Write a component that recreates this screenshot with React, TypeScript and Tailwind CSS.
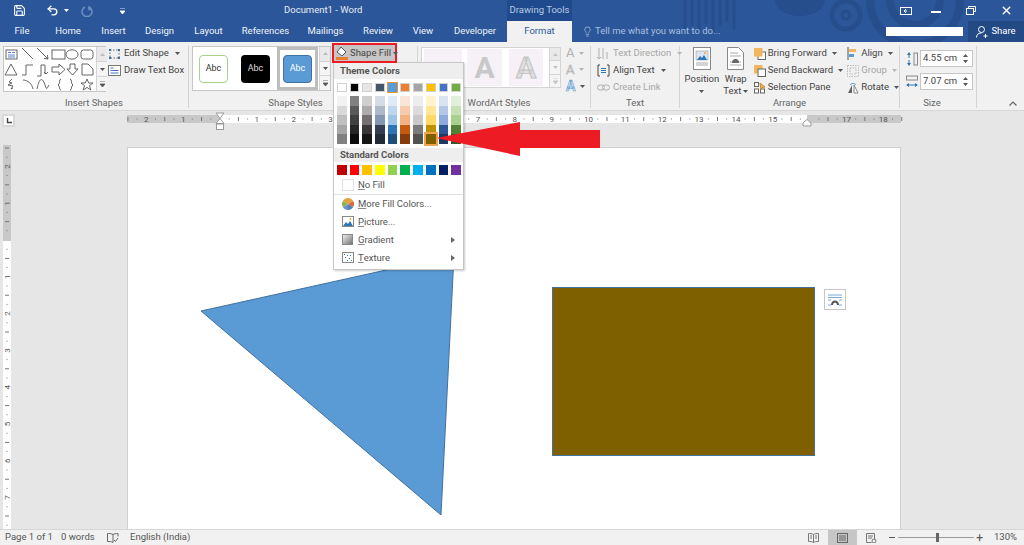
import React from 'react';
import { Lightbulb, Save, Undo2, X } from 'lucide-react';

const tabs = [
  { label: 'File', width: 'w-[44px]' },
  { label: 'Home', width: 'w-[48px]' },
  { label: 'Insert', width: 'w-[43px]' },
  { label: 'Design', width: 'w-[49px]' },
  { label: 'Layout', width: 'w-[49px]' },
  { label: 'References', width: 'w-[65px]' },
  { label: 'Mailings', width: 'w-[55px]' },
  { label: 'Review', width: 'w-[50px]' },
  { label: 'View', width: 'w-[40px]' },
  { label: 'Developer', width: 'w-[64px]' },
];

const themeTop = ['#ffffff', '#000000', '#e7e6e6', '#44546a', '#5b9bd5', '#ed7d31', '#a5a5a5', '#ffc000', '#4472c4', '#70ad47'];

const themeShades = [
  ['#f2f2f2', '#d9d9d9', '#bfbfbf', '#a6a6a6', '#808080'],
  ['#808080', '#595959', '#404040', '#262626', '#0d0d0d'],
  ['#d0cece', '#aeabab', '#757070', '#3a3838', '#171616'],
  ['#d6dce5', '#adb9ca', '#8497b0', '#333f50', '#222a35'],
  ['#deebf7', '#bdd7ee', '#9dc3e6', '#2e75b6', '#1f4e79'],
  ['#fbe5d6', '#f8cbad', '#f4b183', '#c55a11', '#843c0c'],
  ['#ededed', '#dbdbdb', '#c9c9c9', '#7b7b7b', '#525252'],
  ['#fff2cc', '#ffe699', '#ffd966', '#bf9000', '#7f6000'],
  ['#dae3f3', '#b4c7e7', '#8faadc', '#2f5597', '#203864'],
  ['#e2f0d9', '#c5e0b4', '#a9d18e', '#548235', '#385723'],
];

const standard = ['#c00000', '#ff0000', '#ffc000', '#ffff00', '#92d050', '#00b050', '#00b0f0', '#0070c0', '#002060', '#7030a0'];

const Caret = ({ light = false }: { light?: boolean }) => (
  <svg width="5" height="3" viewBox="0 0 5 3" className="shrink-0">
    <path d="M0 0h5L2.5 3z" fill={light ? '#b5b5b5' : '#555'} />
  </svg>
);

const Group = ({ label, width, labelPad = '', children }: { label: string; width: string; labelPad?: string; children: React.ReactNode }) => (
  <div className={`${width} h-[62px] mt-[4px] border-r border-[#d4d4d4] flex flex-col shrink-0`}>
    <div className="h-[55px] flex">{children}</div>
    <div className={`${labelPad} h-[10px] leading-[10px] text-center text-[9.5px] text-[#666]`}>{label}</div>
  </div>
);

const ScrollButtons = ({ light = false }: { light?: boolean }) => {
  const fill = light ? '#c4c4c4' : '#555';
  return (
    <div className="w-[11px] h-full flex flex-col border-l border-[#d4d4d4] bg-[#f5f5f5] shrink-0">
      <div className="flex-1 flex items-center justify-center bg-[#e9e9e9] border-b border-[#d4d4d4]">
        <svg width="5" height="3"><path d="M0 3h5L2.5 0z" fill={light ? '#c4c4c4' : '#bbb'} /></svg>
      </div>
      <div className="flex-1 flex items-center justify-center border-b border-[#d4d4d4]">
        <svg width="5" height="3"><path d="M0 0h5L2.5 3z" fill={fill} /></svg>
      </div>
      <div className="flex-1 flex items-center justify-center">
        <svg width="5" height="6"><path d="M0 0h5M0 3h5L2.5 6z" stroke={fill} strokeWidth="0.8" fill={fill} /></svg>
      </div>
    </div>
  );
};

const ShapeGallery = () => (
  <svg width="92" height="44" viewBox="0 0 92 44" fill="none" stroke="#555" strokeWidth="0.9" className="shrink-0">
    <rect x="2" y="3" width="11" height="9" fill="#fff" />
    <path d="M4 5.5h3M8 5.5h3M4 8h7M4 10h7" stroke="#4472c4" />
    <path d="M18 1l11 11M33 1l11 11M44 12l-4-.6M44 12l-.6-4" />
    <rect x="48" y="3" width="13" height="9" />
    <ellipse cx="68" cy="7.5" rx="6" ry="4.7" />
    <rect x="77" y="3" width="12" height="9" rx="2.5" />
    <path d="M7 17l6 11H1zM18 28h4V18h7M33 29h4V18h4v9M42 27l-2-2M42 27l2-2" />
    <path d="M48 20h7v-3l6 5.5-6 5.5v-3h-7zM66 17h5v5h3l-5.5 6-5.5-6h3zM78 17h6l5 5v6H78z" />
    <path d="M8 32l-3 3 3 1-4 2 5 1-2 3 2-1M19 33c5 0 9 4 10 9M33 42c3-14 6-10 8-4s2 3 4 0M57 32c-2 0-1 4-2 5l-1 1 1 1c1 1 0 4 2 4M66 32c2 0 1 4 2 5l1 1-1 1c-1 1 0 4-2 4" />
    <path d="M83 32l1.7 4h4.3l-3.5 2.6 1.3 4.400-3.800-2.600-3.800 2.600 1.300-4.400-3.500-2.600h4.300z" />
  </svg>
);

const Style = ({ className, text }: { className: string; text: string }) => (
  <div className={`w-[29px] h-[28px] rounded-[4px] flex items-center justify-center text-[9px] ${className}`}>
    <span className={text}>Abc</span>
  </div>
);

const SmallRow = ({ icon, label, light = false, caret = false, gap = 'gap-[3px]' }: { icon: React.ReactNode; label: string; light?: boolean; caret?: boolean; gap?: string }) => (
  <div className={`h-[17px] flex items-center ${gap} text-[9.5px] whitespace-nowrap ${light ? 'text-[#a6a6a6]' : 'text-[#444]'}`}>
    {icon}
    <span>{label}</span>
    {caret && <span className="ml-[3px]"><Caret light={light} /></span>}
  </div>
);

const HorizontalRuler = () => {
  const zero = 93;
  const cm = 36.85;
  const ticks: number[] = [];
  for (let i = -2.5; i <= 18.5; i += 0.25) if (i % 1 !== 0) ticks.push(i);
  const nums = [-2, -1, 1, 2, 3, 4, 5, 6, 7, 8, 9, 10, 11, 12, 13, 14, 15, 17, 18];
  return (
    <svg width="774" height="8" className="overflow-visible shrink-0">
      <rect width="774" height="8" fill="#c8c8c8" />
      <rect x={zero} width="587" height="8" fill="#fff" />
      {ticks.map((t) => {
        const x = zero + t * cm;
        return t % 0.5 === 0
          ? <rect key={t} x={x - 0.5} y="2" width="1" height="4" fill="#777" />
          : <rect key={t} x={x - 0.5} y="3.5" width="1" height="1" fill="#777" />;
      })}
      {nums.map((n) => (
        <text key={n} x={zero + n * cm} y="7" textAnchor="middle" fontSize="8" fill="#555">{Math.abs(n)}</text>
      ))}
      <path d="M89 -2h8l-4 5.500 4 5h-8l4-5z" fill="#fff" stroke="#999" />
      <rect x="89.5" y="9" width="7" height="5.5" fill="#fff" stroke="#999" />
      <path d="M676 11h8v-3l-4-3.500-4 3.500z" fill="#fff" stroke="#999" />
    </svg>
  );
};

const VerticalRuler = () => {
  const zero = 95;
  const cm = 36.8;
  const ticks: number[] = [];
  for (let i = -2.5; i <= 7.9; i += 0.25) if (i % 1 !== 0) ticks.push(i);
  const nums = [-2, -1, 1, 2, 3, 4, 5, 6, 7];
  return (
    <svg width="8" height="384" className="shrink-0 overflow-visible">
      <rect width="8" height="384" fill="#fff" />
      <rect width="8" height={zero + 1} fill="#c8c8c8" />
      {ticks.map((t) => {
        const y = zero + t * cm;
        return t % 0.5 === 0
          ? <rect key={t} x="2" y={y - 0.5} width="4" height="1" fill="#777" />
          : <rect key={t} x="3.5" y={y - 0.5} width="1" height="1" fill="#777" />;
      })}
      {nums.map((n) => (
        <text key={n} x="4" y={zero + n * cm + 3} textAnchor="middle" fontSize="8" fill="#555" transform={`rotate(-90 4 ${zero + n * cm})`}>{Math.abs(n)}</text>
      ))}
    </svg>
  );
};

const MenuRow = ({ icon, label, rest, arrow = false }: { icon: React.ReactNode; label: string; rest: string; arrow?: boolean }) => (
  <div className="h-[18px] flex items-center text-[9.5px] text-[#555]">
    <div className="w-[24px] flex justify-center pl-[3px]">{icon}</div>
    <span className="underline decoration-[#888]">{label}</span>
    <span>{rest}</span>
    {arrow && (
      <svg width="4" height="6" className="ml-auto mr-[8px]"><path d="M0 0l4 3-4 3z" fill="#666" /></svg>
    )}
  </div>
);

const ShapeFillMenu = () => (
  <div className="absolute left-[333px] top-[62px] w-[131px] h-[208px] bg-white border border-[#c6c6c6] shadow-[1px_1px_2px_rgba(0,0,0,0.2)] flex flex-col">
    <div className="h-[16px] bg-[#eeeeee] px-[6px] text-[9.5px] font-bold leading-[16px] text-[#555]">Theme Colors</div>
    <div className="flex gap-[3px] pl-[3px] mt-[4px]">
      {themeTop.map((c, i) => (
        <div key={c} className={`w-[9.7px] h-[9px] ${i === 4 ? 'outline outline-[1.5px] outline-[#f29436]' : 'outline outline-1 -outline-offset-1 outline-[#d0d0d0]'}`} style={{ backgroundColor: c }} />
      ))}
    </div>
    <div className="flex gap-[3px] pl-[3px] mt-[4px]">
      {themeShades.map((col, i) => (
        <div key={i} className="flex flex-col w-[9.7px]">
          {col.map((c, j) => (
            <div key={j} className={`h-[9.6px] ${i === 7 && j === 4 ? 'relative z-10 outline-2 outline-[#f2a44e]' : ''}`} style={{ backgroundColor: c }} />
          ))}
        </div>
      ))}
    </div>
    <div className="h-[14px] bg-[#eeeeee] mt-[4px] px-[6px] text-[9.5px] font-bold leading-[14px] text-[#555]">Standard Colors</div>
    <div className="flex gap-[3px] pl-[3px] mt-[3px]">
      {standard.map((c) => (
        <div key={c} className="w-[9.7px] h-[9.7px]" style={{ backgroundColor: c }} />
      ))}
    </div>
    <div className="h-[18px] mt-[1px] flex items-center text-[9.5px] text-[#555]">
      <div className="w-[24px] flex justify-center pl-[3px]">
        <div className="w-[12px] h-[12px] border border-[#e2e2e2]" />
      </div>
      <span className="underline decoration-[#888]">N</span><span>o Fill</span>
    </div>
    <div className="h-px bg-[#e2e2e2] shrink-0" />
    <MenuRow
      label="M"
      rest="ore Fill Colors..."
      icon={
        <svg width="12" height="12" viewBox="0 0 12 12">
          <path d="M6 6V0a6 6 0 0 1 5.2 3z" fill="#e8a33d" />
          <path d="M6 6l5.2-3a6 6 0 0 1 0 6z" fill="#d9693a" />
          <path d="M6 6l5.2 3A6 6 0 0 1 6 12z" fill="#4f81bd" />
          <path d="M6 6v6a6 6 0 0 1-5.2-3z" fill="#6f8fc7" />
          <path d="M6 6L.8 9a6 6 0 0 1 0-6z" fill="#8db255" />
          <path d="M6 6L.8 3A6 6 0 0 1 6 0z" fill="#d9a441" />
        </svg>
      }
    />
    <MenuRow
      label="P"
      rest="icture..."
      icon={
        <svg width="12" height="11" viewBox="0 0 12 11">
          <rect x="0.5" y="0.5" width="11" height="10" fill="#fff" stroke="#888" />
          <path d="M1 10l3-4 2 2 2-3 3 5z" fill="#2e75b6" />
          <circle cx="8.5" cy="3" r="1" fill="#f0a33c" />
        </svg>
      }
    />
    <MenuRow
      label="G"
      rest="radient"
      arrow
      icon={<div className="w-[11px] h-[11px] border border-[#888] bg-gradient-to-br from-[#eeeeee] to-[#777777]" />}
    />
    <MenuRow
      label="T"
      rest="exture"
      arrow
      icon={
        <svg width="12" height="11" viewBox="0 0 12 11">
          <rect x="0.5" y="0.5" width="11" height="10" fill="#fff" stroke="#888" />
          <path d="M2 2h1v1H2zM5 3h1v1H5zM3 5h1v1H3zM7 6h1v1H7zM9 8h1v1H9zM5 8h1v1H5zM8 3h1v1H8z" fill="#2e75b6" />
        </svg>
      }
    />
  </div>
);

const App = () => {
  return (
    <div className="relative w-[1024px] h-[545px] overflow-hidden flex flex-col bg-[#e6e6e6] font-['Roboto',sans-serif]">
      {/* title bar */}
      <div className="relative h-[42px] bg-[#2b579a] text-white shrink-0">
        <svg width="344" height="42" viewBox="0 0 344 42" className="absolute right-0 top-0" fill="none" stroke="#264e8c">
          <path d="M5 0v30M12 0v26M19 0v34M26 0v24M33 0v32M40 0v26M47 0v22M54 0v30" strokeWidth="3" />
          <path d="M95 0a25 16 0 0 0 50 0" fill="#264e8c" stroke="none" />
          <circle cx="166" cy="15" r="14" strokeWidth="5" />
          <circle cx="166" cy="15" r="4" strokeWidth="3" />
          <circle cx="235" cy="0" r="45" strokeWidth="8" />
          <circle cx="235" cy="0" r="25" strokeWidth="8" />
        </svg>
        <div className="relative h-[21px] flex items-center">
          <div className="w-[284px] flex items-center">
            <Save size={13} strokeWidth={2} className="ml-[13px]" />
            <Undo2 size={13} strokeWidth={2.5} className="ml-[20px]" />
            <span className="ml-[5px]"><svg width="5" height="3"><path d="M0 0h5L2.5 3z" fill="#fff" /></svg></span>
            <svg width="12" height="12" viewBox="0 0 12 12" fill="none" stroke="#6e8fc0" strokeWidth="1.5" className="ml-[12px]">
              <path d="M8 2a5 5 0 1 1-4 0M8 1v3.5h3" />
            </svg>
            <svg width="5" height="6" className="ml-[27px]"><path d="M0 0h5M0 3h5L2.5 6z" stroke="#fff" strokeWidth="0.8" fill="#fff" /></svg>
          </div>
          <div className="w-[223px] text-[9.5px] text-[#e6ecf5] whitespace-nowrap">Document1 - Word</div>
          <div className="w-[65px] h-full bg-[#1f4b8e] text-[9.5px] text-[#b9cae3] flex items-center justify-center whitespace-nowrap">Drawing Tools</div>
          <div className="ml-auto flex items-center">
            <svg width="12" height="9" viewBox="0 0 12 9" fill="none" stroke="#fff" className="mr-[19px]"><rect x="0.5" y="1.5" width="11" height="7" /><path d="M0 1.5h12M7 5L4 5M6 3L4 5l2 2" /></svg>
            <div className="w-[10px] h-[2px] bg-white mt-[2px] mr-[25px]" />
            <svg width="10" height="9" viewBox="0 0 10 9" fill="none" stroke="#fff" className="mr-[24px]"><rect x="0.5" y="2.5" width="7" height="6" /><path d="M2.5 2.5V.5h7v5h-2" /></svg>
            <X size={13} strokeWidth={2.5} className="mr-[11px]" />
          </div>
        </div>
        <div className="relative h-[21px] flex items-center text-[9.5px] text-[#f0f3f9]">
          {tabs.map((t) => (
            <div key={t.label} className={`${t.width} text-center`}>{t.label}</div>
          ))}
          <div className="w-[65px] h-full bg-[#f1f1f1] text-[#2b579a] flex items-center justify-center">Format</div>
          <Lightbulb size={11} strokeWidth={1.5} className="ml-[10px] text-[#b9cae3]" />
          <span className="ml-[2px] text-[#a9bfdf] whitespace-nowrap">Tell me what you want to do...</span>
          <div className="ml-auto w-[77px] h-[9px] bg-white" />
          <div className="ml-[5px] w-[56px] h-full bg-[#234a85] flex items-center justify-center gap-[3px] text-white">
            <svg width="12" height="12" viewBox="0 0 12 12" fill="none" stroke="#fff"><circle cx="5.5" cy="3.5" r="3" /><path d="M.5 11.5c0-3 2-4.500 5-4.500M9.5 8v4M7.5 10h4" /></svg>
            <span>Share</span>
          </div>
        </div>
      </div>

      {/* ribbon */}
      <div className="h-[69px] bg-[#f1f1f1] flex shrink-0 border-b border-[#d6d6d6]">
        <Group label="Insert Shapes" width="w-[189px]">
          <div className="ml-[3px] w-[103px] h-[46px] bg-white border border-[#c6c6c6] flex">
            <ShapeGallery />
            <ScrollButtons />
          </div>
          <div className="ml-[2px] -mt-[1px] flex flex-col">
            <SmallRow
              caret
              gap="gap-[3px]"
              label="Edit Shape"
              icon={
                <svg width="13" height="12" viewBox="0 0 13 12" fill="none">
                  <path d="M2 2h9v8H2z" stroke="#666" strokeDasharray="1.5 1.5" />
                  <path d="M1 1h2v2H1zM10 1h2v2h-2zM1 9h2v2H1zM10 9h2v2h-2z" fill="#2e75b6" />
                </svg>
              }
            />
            <SmallRow
              label="Draw Text Box"
              icon={
                <svg width="13" height="11" viewBox="0 0 13 11" fill="none">
                  <rect x="0.5" y="0.5" width="12" height="10" stroke="#777" fill="#fff" />
                  <path d="M2.5 3h3M2.5 5.5h8M2.5 8h8" stroke="#4472c4" />
                </svg>
              }
            />
          </div>
        </Group>

        <Group label="Shape Styles" width="w-[229px]" labelPad="pr-[15px]">
          <div className="ml-[3px] w-[139px] h-[45px] bg-white border border-[#c6c6c6] flex items-center">
            <div className="flex-1 flex items-center pl-[6px]">
              <Style className="bg-white border border-[#a9d18e]" text="text-[#333]" />
              <Style className="bg-black ml-[13px]" text="text-[#ddd]" />
              <div className="ml-[7px] w-[41px] h-[43px] border-[3px] border-[#bdbdbd] flex items-center justify-center">
                <Style className="bg-[#5b9bd5] border border-[#41719c]" text="text-white" />
              </div>
            </div>
            <ScrollButtons />
          </div>
          <div className="relative z-20 ml-[1px] mt-[-3px] w-[65px] h-[20px] border-2 border-[#ed1c24] bg-[#c6c6c6] flex items-center pl-[2px] gap-[2px] text-[9.5px] text-[#444] whitespace-nowrap">
            <svg width="12" height="14" viewBox="0 0 12 14" className="shrink-0">
              <path d="M5 1l5 5-4 4-5-4z" fill="#fff" stroke="#555" />
              <rect y="11" width="12" height="3" fill="#ed7d31" />
            </svg>
            <span>Shape Fill</span>
            <Caret />
          </div>
        </Group>

        <Group label="WordArt Styles" width="w-[173px]" labelPad="pr-[10px]">
          <div className="ml-[3px] mt-[1px] w-[140px] h-[41px] bg-white border border-[#d4d4d4] flex">
            <div className="flex-1 flex items-center pl-[2px] pt-[1px] pb-[1px]">
              <div className="w-[38px] h-full bg-[#f6f1f6]" />
              <div className="ml-[5px] w-[35px] h-full bg-[#f6f1f6] flex items-center justify-center text-[30px] font-bold leading-none text-[#c8c8c8]">A</div>
              <div className="ml-[7px] w-[34px] h-full bg-[#f6f1f6] flex items-center justify-center text-[30px] font-bold leading-none text-[#e0e0e0] [-webkit-text-stroke:1px_#c4c4c4]">A</div>
            </div>
            <ScrollButtons light />
          </div>
          <div className="ml-[5px] -mt-[1px] flex flex-col items-start">
            <div className="h-[16px] flex items-center gap-[5px] text-[13px] text-[#b0b0b0]">A <Caret light /></div>
            <div className="h-[17px] flex items-center gap-[5px] text-[13px] text-[#e8e8e8] [-webkit-text-stroke:0.6px_#b0b0b0]">A <Caret light /></div>
            <div className="h-[17px] flex items-center gap-[5px] text-[14px] font-bold text-[#d6e4f5] [-webkit-text-stroke:0.6px_#5b9bd5]">A <Caret /></div>
          </div>
        </Group>

        <Group label="Text" width="w-[89px]">
          <div className="ml-[6px] -mt-[1px] flex flex-col">
            <SmallRow
              caret
              light
              label="Text Direction"
              icon={
                <svg width="13" height="13" viewBox="0 0 13 13" fill="none" stroke="#b0b0b0">
                  <path d="M2 1v11M6 1v11M10 5v7M0 10l2 2 2-2" />
                </svg>
              }
            />
            <SmallRow
              caret
              label="Align Text"
              icon={
                <svg width="13" height="13" viewBox="0 0 13 13" fill="none">
                  <path d="M3 1H1v11h2M10 1h2v11h-2" stroke="#444" />
                  <path d="M4 4.5h5M4 6.5h5M4 8.5h5" stroke="#2e75b6" />
                </svg>
              }
            />
            <SmallRow
              light
              label="Create Link"
              icon={
                <svg width="13" height="9" viewBox="0 0 13 9" fill="none" stroke="#b0b0b0">
                  <rect x="0.5" y="2" width="7" height="5" rx="2.5" />
                  <rect x="5.5" y="2" width="7" height="5" rx="2.5" />
                </svg>
              }
            />
          </div>
        </Group>

        <Group label="Arrange" width="w-[220px]">
          <div className="w-[42px] ml-[1px] flex flex-col items-center text-[9.5px] text-[#444]">
            <svg width="18" height="23" viewBox="0 0 18 23" className="mt-[1px]">
              <rect x="0.5" y="0.5" width="17" height="22" fill="#fff" stroke="#888" />
              <rect x="3" y="4" width="12" height="9" fill="#dce6f2" stroke="#888" strokeWidth="0.5" />
              <path d="M4 13l3-4 2 2 2-3 3 5z" fill="#2e75b6" />
              <circle cx="12" cy="6" r="1" fill="#f0a33c" />
              <path d="M3 16h12M3 18h12" stroke="#aaa" />
            </svg>
            <span className="leading-[12px] mt-[3px]">Position</span>
            <span className="mt-[5px]"><Caret /></span>
          </div>
          <div className="w-[26px] flex flex-col items-center text-[9.5px] text-[#444]">
            <svg width="17" height="23" viewBox="0 0 17 23" className="mt-[1px] shrink-0" fill="none">
              <path d="M.5.5h11l5 5v17H.5z" fill="#fff" stroke="#888" />
              <path d="M3 6h8M3 9h11M3 18h11M3 15h2M12 15h2" stroke="#aaa" />
              <path d="M5 16a3.5 4 0 0 1 7 0z" fill="#666" />
            </svg>
            <span className="leading-[12px] mt-[3px]">Wrap</span>
            <span className="leading-[12px] flex items-center gap-[2px] whitespace-nowrap">Text <Caret /></span>
          </div>
          <div className="ml-[5px] -mt-[1px] w-[94px] flex flex-col">
            <SmallRow
              caret
              gap="gap-[2px]"
              label="Bring Forward"
              icon={
                <svg width="12" height="12" viewBox="0 0 12 12"><rect x="4" y="4" width="7.5" height="7.5" fill="#fff" stroke="#666" /><rect width="8.5" height="8.5" fill="#f2b661" /></svg>
              }
            />
            <SmallRow
              caret
              gap="gap-[2px]"
              label="Send Backward"
              icon={
                <svg width="12" height="12" viewBox="0 0 12 12"><rect width="8.5" height="8.5" fill="#f2b661" /><rect x="4" y="4" width="7.5" height="7.5" fill="#fff" stroke="#666" /></svg>
              }
            />
            <SmallRow
              gap="gap-[2px]"
              label="Selection Pane"
              icon={
                <svg width="12" height="12" viewBox="0 0 12 12" fill="#fff" stroke="#666"><rect x="0.5" y="0.5" width="4" height="4" /><rect x="0.5" y="7" width="4" height="4" /><rect x="6.5" y="7" width="4" height="4" /><path d="M6 1l5 4-3 .5L7 8z" fill="#f2b661" stroke="#c98a2e" /></svg>
              }
            />
          </div>
          <div className="-mt-[1px] flex flex-col">
            <SmallRow
              caret
              gap="gap-[2px]"
              label="Align"
              icon={
                <svg width="12" height="13" viewBox="0 0 12 13"><path d="M1 0v13" stroke="#555" /><rect x="2" y="2" width="7" height="3" fill="#f2b661" /><rect x="2" y="7" width="5" height="3" fill="#5b9bd5" /></svg>
              }
            />
            <SmallRow
              caret
              light
              gap="gap-[2px]"
              label="Group"
              icon={
                <svg width="12" height="12" viewBox="0 0 12 12" fill="none" stroke="#bdbdbd" strokeDasharray="1.5 1"><rect x="0.5" y="0.5" width="11" height="11" /><rect x="3" y="3" width="6" height="6" /></svg>
              }
            />
            <SmallRow
              caret
              gap="gap-[2px]"
              label="Rotate"
              icon={
                <svg width="12" height="12" viewBox="0 0 12 12"><path d="M1 11L5 3v8z" fill="#666" /><path d="M7 11V3l4 8z" fill="#fff" stroke="#888" /><path d="M3 3c1-2 5-2 6 0" stroke="#5b9bd5" fill="none" /></svg>
              }
            />
          </div>
        </Group>

        <Group label="Size" width="w-[77px]" labelPad="pr-[12px]">
          <div className="ml-[6px] flex flex-col gap-[6px] mt-[4px]">
            <div className="flex items-center gap-[2px]">
              <svg width="12" height="14" viewBox="0 0 12 14" fill="none">
                <path d="M3 0l2 3H1zM3 14l2-3H1z" fill="#2e75b6" />
                <path d="M3 3v3M3 8v3" stroke="#2e75b6" />
                <rect x="8" y="1" width="3.5" height="12" stroke="#888" />
              </svg>
              <div className="w-[53px] h-[17px] bg-white border border-[#c6c6c6] pl-[2px] flex items-center justify-between pr-[4px] text-[9.5px] text-[#444]">
                <span>4.55 cm</span>
                <svg width="5" height="9"><path d="M0 3h5L2.5 0zM0 6h5L2.5 9z" fill="#555" /></svg>
              </div>
            </div>
            <div className="flex items-center gap-[2px]">
              <svg width="12" height="14" viewBox="0 0 12 14" fill="none">
                <rect x="0.5" y="1" width="11" height="4" stroke="#888" />
                <path d="M0 10l3-2v4zM12 10l-3-2v4z" fill="#2e75b6" />
                <path d="M3 10h6" stroke="#2e75b6" />
              </svg>
              <div className="w-[53px] h-[17px] bg-white border border-[#c6c6c6] pl-[2px] flex items-center justify-between pr-[4px] text-[9.5px] text-[#444]">
                <span>7.07 cm</span>
                <svg width="5" height="9"><path d="M0 3h5L2.5 0zM0 6h5L2.5 9z" fill="#555" /></svg>
              </div>
            </div>
          </div>
        </Group>

        <div className="flex-1 flex items-end justify-end pr-[7px] pb-[4px]">
          <svg width="8" height="5" fill="none" stroke="#666" strokeWidth="1.2"><path d="M.5 4.500L4 1l3.500 3.500" /></svg>
        </div>
      </div>

      {/* document area */}
      <div className="flex-1 min-h-0 flex flex-col bg-[#e6e6e6]">
        <div className="h-[34px] flex items-start pl-[2px] pt-[3px] shrink-0">
          <div className="w-[13px] h-[13px] bg-white border-2 border-[#d8d8d8] flex items-center justify-center">
            <svg width="6" height="6"><path d="M1.5 0v4.500H6" stroke="#444" strokeWidth="1.4" fill="none" /></svg>
          </div>
          <div className="ml-[112px] mt-[1px] flex"><HorizontalRuler /></div>
        </div>
        <div className="flex pl-[3px]">
          <VerticalRuler />
          <div className="relative ml-[116px] mt-[2px] w-[774px] h-[382px] bg-white border-t border-x border-[#d0d0d0]">
            <svg width="270" height="270" viewBox="0 0 270 270" className="absolute left-[72px] top-[106px]">
              <path d="M1 57L254 1l-13 260z" fill="#5b9bd5" stroke="#41719c" strokeWidth="1" />
            </svg>
            <div className="absolute left-[424px] top-[139px] w-[263px] h-[169px] bg-[#7f6000] border-[1.5px] border-[#41719c]" />
            <div className="absolute left-[696px] top-[141px] w-[22px] h-[21px] bg-white border border-[#c6c6c6] flex items-center justify-center">
              <svg width="14" height="12" viewBox="0 0 14 12" fill="none">
                <path d="M0 1h14M0 3.5h14M0 11h3M11 11h3M0 6h3M11 6h3" stroke="#7da7d9" />
                <path d="M3 11a4 4.500 0 0 1 8 0h-2a2 2.500 0 0 0-4 0z" fill="#555" />
              </svg>
            </div>
          </div>
        </div>
      </div>

      {/* status bar */}
      <div className="h-[16px] bg-[#f1f1f1] border-t border-[#d6d6d6] flex items-center text-[9.5px] text-[#555] shrink-0 whitespace-nowrap">
        <span className="ml-[5px] w-[42px]">Page 1 of 1</span>
        <span className="ml-[14px] w-[31px]">0 words</span>
        <svg width="12" height="10" viewBox="0 0 12 10" fill="none" stroke="#666" className="ml-[15px]">
          <path d="M6 1.500C4.500.5 2 .5.5.5v8c2 0 4 0 5.500 1V1.500zM6 1.500C7 1 9 .5 11 .5v3M7 7l1.500 1.500L11 5" />
        </svg>
        <span className="ml-[11px]">English (India)</span>
        <div className="ml-auto flex items-center h-full">
          <svg width="11" height="10" viewBox="0 0 11 10" fill="none" stroke="#777"><path d="M5.500 1.500C4 .5 2 .5.5.5v8c2 0 3.500 0 5 1 1.500-1 3-1 5-1v-8c-2 0-3.500 0-5 1zM5.500 1.500v8M2 3h2M2 5h2M7 3h2M7 5h2" /></svg>
          <div className="ml-[9px] w-[29px] h-full bg-[#c6c6c6] flex items-center justify-center">
            <svg width="11" height="10" viewBox="0 0 11 10" fill="none" stroke="#666"><rect x="0.5" y="0.5" width="10" height="9" /><path d="M2 3h7M2 5h7M2 7h7" /></svg>
          </div>
          <svg width="11" height="10" viewBox="0 0 11 10" fill="none" stroke="#777" className="ml-[9px]"><path d="M.5.5h8v6M.5.5v9h5M2 3h5M2 5h4" /><circle cx="8" cy="8" r="2" /></svg>
          <div className="ml-[12px] w-[6px] h-px bg-[#555]" />
          <div className="relative ml-[3px] w-[76px] h-px bg-[#9a9a9a] flex items-center">
            <div className="absolute left-[38px] w-[3px] h-[9px] bg-[#666]" />
          </div>
          <span className="ml-[2px] text-[12px] leading-none">+</span>
          <span className="ml-[11px] mr-[7px]">130%</span>
        </div>
      </div>

      <ShapeFillMenu />

      {/* red arrow callout */}
      <svg width="166" height="36" viewBox="0 0 166 36" className="absolute left-[435px] top-[121px]">
        <path d="M1 17L85 1v8h80v18H85v8z" fill="#ed1c24" />
      </svg>
    </div>
  );
};

export default App;
